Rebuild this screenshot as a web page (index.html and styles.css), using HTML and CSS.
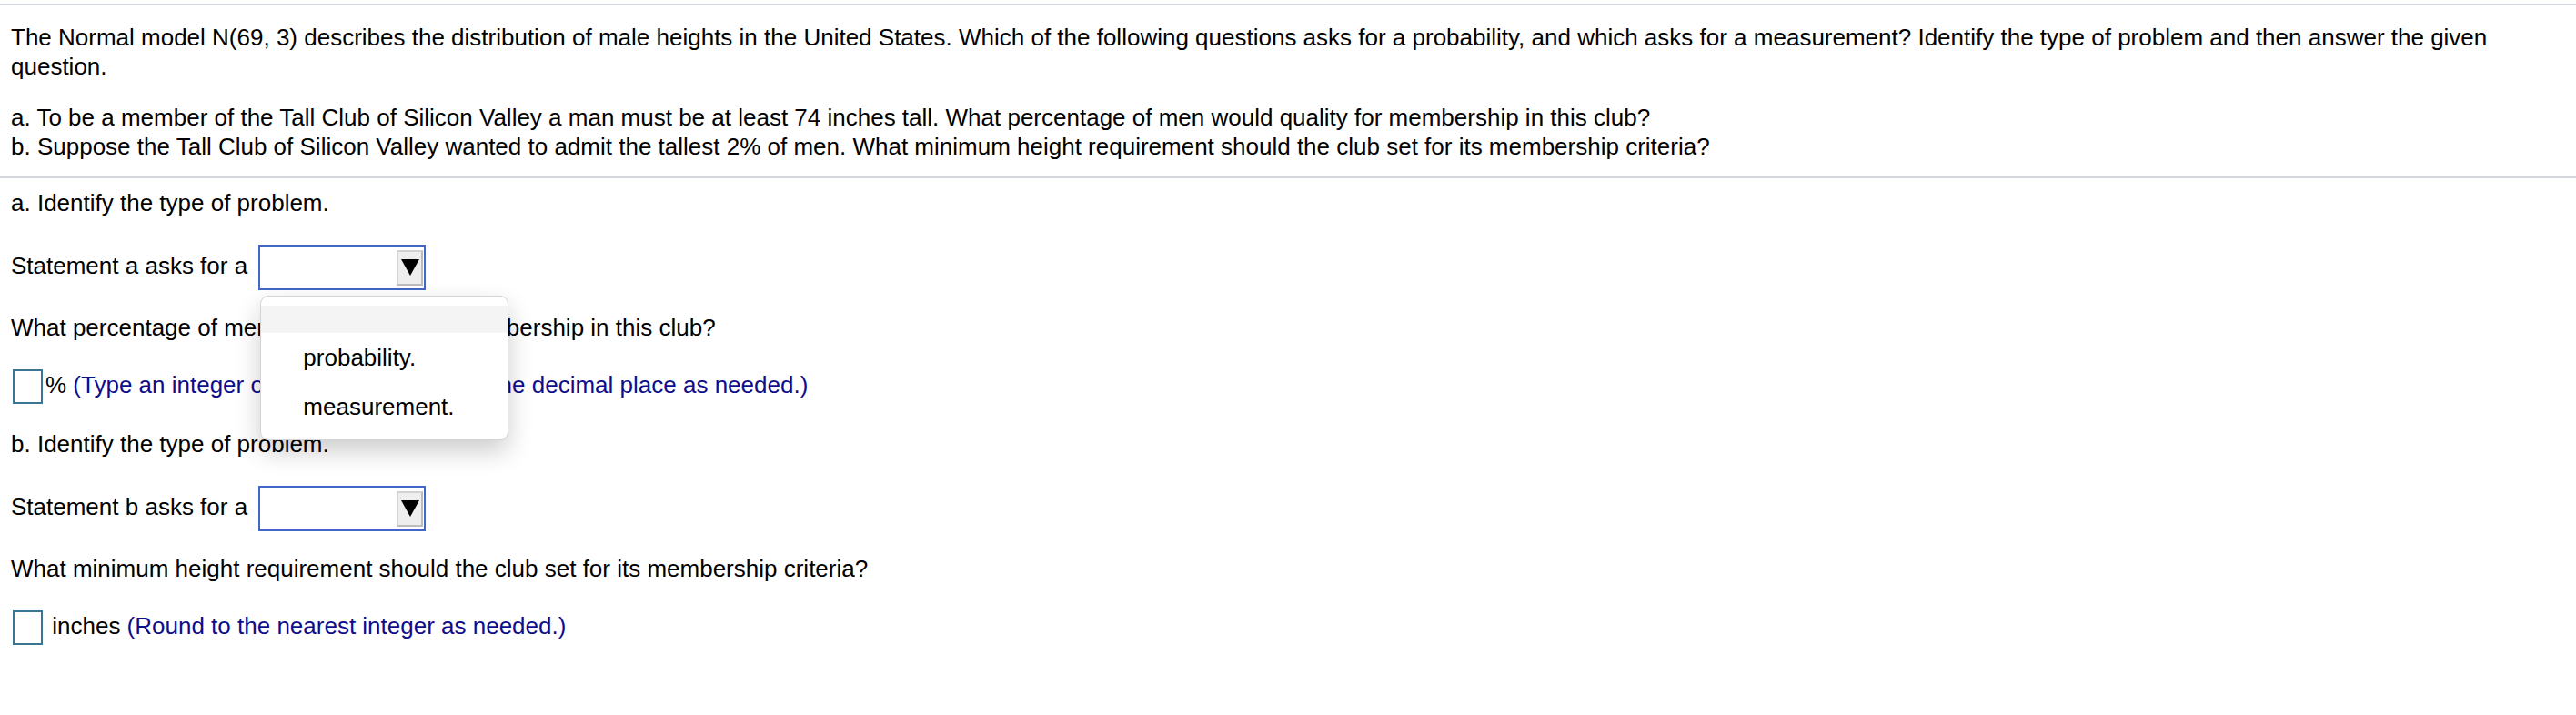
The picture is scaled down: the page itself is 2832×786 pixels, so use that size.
FILE: index.html
```html
<!DOCTYPE html>
<html lang="en">
<head>
<meta charset="utf-8">
<title>Normal model question</title>
<link rel="stylesheet" href="styles.css">
</head>
<body>
<div class="page">
  <section class="question">
    <p class="para">The Normal model N(69, 3) describes the distribution of male heights in the United States. Which of the following questions asks for a probability, and which asks for a measurement? Identify the type of problem and then answer the given question.</p>
    <p class="para gap">a. To be a member of the Tall Club of Silicon Valley a man must be at least 74 inches tall. What percentage of men would quality for membership in this club?<br>b. Suppose the Tall Club of Silicon Valley wanted to admit the tallest 2% of men. What minimum height requirement should the club set for its membership criteria?</p>
  </section>
  <section class="answer">
    <div class="row first">a. Identify the type of problem.</div>
    <div class="row field">Statement a asks for a <span class="select-wrap"><span class="select"><span class="select-btn"><svg class="tri" viewBox="0 0 20 18" width="20" height="18"><polygon points="0,0 20,0 10,18" fill="#000"/></svg></span></span><span class="menu"><span class="opt blank"></span><span class="opt">probability.</span><span class="opt">measurement.</span></span></span></div>
    <div class="row">What percentage of men would quality for membership in this club?</div>
    <div class="row field"><span class="box"></span>% <span class="hint">(Type an integer or decimal rounded to one decimal place as needed.)</span></div>
    <div class="row part">b. Identify the type of problem.</div>
    <div class="row field">Statement b asks for a <span class="select-wrap"><span class="select"><span class="select-btn"><svg class="tri" viewBox="0 0 20 18" width="20" height="18"><polygon points="0,0 20,0 10,18" fill="#000"/></svg></span></span></span></div>
    <div class="row">What minimum height requirement should the club set for its membership criteria?</div>
    <div class="row field"><span class="box"></span> inches <span class="hint">(Round to the nearest integer as needed.)</span></div>
  </section>
</div>
</body>
</html>
```
FILE: styles.css
```css
html, body {
  margin: 0;
  padding: 0;
  background: #fff;
}
body {
  font-family: "Liberation Sans", Arial, Helvetica, sans-serif;
  font-size: 26px;
  line-height: 32px;
  color: #000;
}
.page {
  padding-top: 4px;
}
.question {
  border-top: 2px solid #d3d5de;
  border-bottom: 2px solid #d3d5de;
  padding: 19px 13px 17px 12px;
}
.para {
  margin: 0;
}
.para.gap {
  margin-top: 24px;
}
.answer {
  padding: 11px 12px 0 12px;
}
.row {
  margin-top: 25px;
  white-space: nowrap;
}
.row.first {
  margin-top: 0;
}
.row.part {
  margin-top: 28px;
}
.row.field {
  margin-top: 30px;
}
.select-wrap {
  position: relative;
  display: inline-block;
  vertical-align: middle;
  margin-left: 5px;
}
.select {
  display: flex;
  justify-content: flex-end;
  align-items: center;
  box-sizing: border-box;
  width: 184px;
  height: 50px;
  border: 2px solid #4167c8;
  padding: 0 1px;
  background: #fff;
}
.select-btn {
  box-sizing: border-box;
  width: 29px;
  height: 39px;
  display: flex;
  align-items: center;
  justify-content: center;
  background: #eeeeee;
  border: 2px solid #d2d2d2;
  border-right-color: #bcbcbc;
  border-bottom-color: #bcbcbc;
}
.tri {
  display: block;
}
.menu {
  position: absolute;
  left: 2px;
  top: 56px;
  width: 273px;
  box-sizing: border-box;
  background: #fff;
  border: 1px solid #d4d4d4;
  border-radius: 9px;
  padding: 10px 0 9px 0;
  box-shadow: 0 12px 28px rgba(0, 0, 0, 0.2);
  display: flex;
  flex-direction: column;
  z-index: 5;
}
.opt {
  display: block;
  height: 54px;
  line-height: 54px;
  padding-left: 46px;
  color: #000;
}
.opt.blank {
  height: 30px;
  background: #f4f4f4;
}
.box {
  display: inline-block;
  vertical-align: middle;
  box-sizing: border-box;
  width: 33px;
  height: 38px;
  border: 2px solid #3a7593;
  margin-left: 2px;
  margin-right: 3px;
  background: #fff;
}
.hint {
  color: #0e0e8c;
}
```
